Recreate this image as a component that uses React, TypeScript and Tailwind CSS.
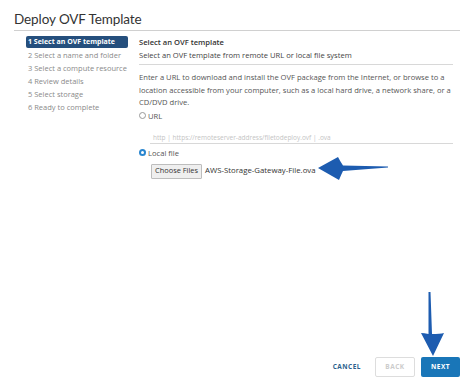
import React from "react";

const font = { fontFamily: '"Open Sans", "Noto Sans", sans-serif' };

export default function App() {
  const steps = [
    "1 Select an OVF template",
    "2 Select a name and folder",
    "3 Select a compute resource",
    "4 Review details",
    "5 Select storage",
    "6 Ready to complete",
  ];
  return (
    <div className="relative w-[474px] h-[391px] bg-white overflow-hidden text-[#565656]" style={font}>
      <div className="pl-[14px] pr-[14px] pt-[9px]">
        <div className="text-[13.5px] leading-[20px] text-[#333] tracking-[-0.1px]" style={{ fontFamily: 'Lato, "Open Sans", sans-serif' }}>
          Deploy OVF Template
        </div>
        <div className="mt-[1px] h-px bg-[#d0d0d0] w-[446px]" />
      </div>
      <div className="flex mt-[5px]">
        <div className="w-[139px] shrink-0 pl-[26px] flex flex-col">
          {steps.map((s, i) => (
            <div
              key={s}
              className={
                i === 0
                  ? "h-[12px] w-[102px] rounded-[2px] bg-[#254f7d] text-white font-bold text-[7px] leading-[12px] pl-[2px] mb-[1px] whitespace-nowrap"
                  : "h-[13px] text-[7.5px] leading-[13px] text-[#8a8a8a] pl-[2px] whitespace-nowrap"
              }
            >
              {s}
            </div>
          ))}
        </div>
        <div className="flex-1 pr-[20px] text-[7.6px]">
          <div className="font-semibold text-[#333] leading-[13px]">Select an OVF template</div>
          <div className="leading-[13px] text-[#444]">Select an OVF template from remote URL or local file system</div>
          <div className="mt-[2px] h-px bg-[#d8d8d8] w-[314px]" />
          <div className="mt-[6px] leading-[12.5px] w-[316px] text-[#555]">
            Enter a URL to download and install the OVF package from the Internet, or browse to a location accessible from your computer, such as a local hard drive, a network share, or a CD/DVD drive.
          </div>
          <div className="flex items-center gap-[2px] leading-[12px] mt-[1px]">
            <span className="inline-block w-[7px] h-[7px] rounded-full border border-[#999] bg-white" />
            <span>URL</span>
          </div>
          <div className="ml-[11px] mt-[10px] w-[303px] border-b border-[#d8d8d8] pl-[3px] text-[6.5px] leading-[11px] text-[#c4c4c4]">
            http | https://remoteserver-address/filetodeploy.ovf | .ova
          </div>
          <div className="flex items-center gap-[2px] leading-[12px] mt-[3px]">
            <span className="w-[7px] h-[7px] rounded-full bg-[#2a86cf] flex items-center justify-center">
              <span className="w-[3px] h-[3px] rounded-full bg-white" />
            </span>
            <span>Local file</span>
          </div>
          <div className="flex items-center ml-[12px] mt-[5px]">
            <div className="h-[15px] w-[51px] border border-[#bdbdbd] bg-[#efefef] text-[#333] text-[7.4px] flex items-center justify-center rounded-[1px]">
              Choose Files
            </div>
            <span className="ml-[3px] text-[#333] text-[7.8px]">AWS-Storage-Gateway-File.ova</span>
          </div>
        </div>
      </div>
      <div className="absolute right-[14px] bottom-[14px] flex items-center gap-[6px] text-[6.5px] font-bold tracking-[0.5px]">
        <div className="px-[8px] h-[20px] flex items-center text-[#2d5f8d]">CANCEL</div>
        <div className="w-[40px] h-[20px] border border-[#ddd] rounded-[2px] flex items-center justify-center text-[#ccc]">BACK</div>
        <div className="w-[39px] h-[20px] bg-[#1976b8] rounded-[2px] flex items-center justify-center text-white">NEXT</div>
      </div>
      <svg className="absolute left-0 top-0 pointer-events-none" width="474" height="391">
        <path d="M388 166.5 Q365 166 343 165.5 Q340 161 338 157 L318 168 L339 180 Q341 175 343 171 Q365 169 388 167.5 Z" fill="#1d5cb0" />
        <path d="M428.5 292 L428.5 334 Q424 333 421 333 L433 356 L444 333 Q440 334 432 334 L430.5 292 Z" fill="#1d5cb0" />
      </svg>
    </div>
  );
}
